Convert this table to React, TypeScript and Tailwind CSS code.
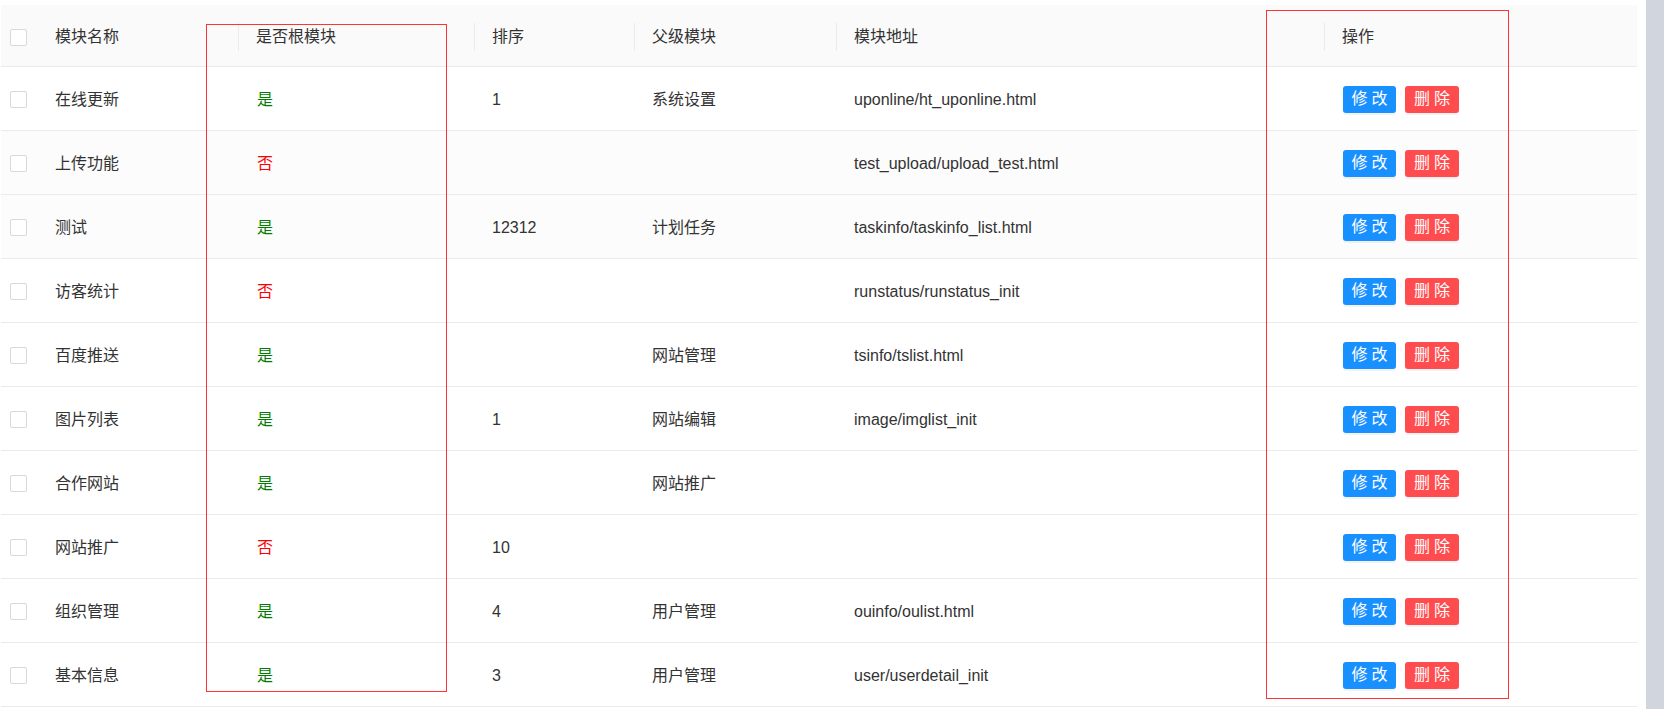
import React from 'react';

interface ModuleRow {
  name: string;
  isRoot: boolean;
  sort: string;
  parent: string;
  url: string;
}

const rows: ModuleRow[] = [
  { name: '在线更新', isRoot: true, sort: '1', parent: '系统设置', url: 'uponline/ht_uponline.html' },
  { name: '上传功能', isRoot: false, sort: '', parent: '', url: 'test_upload/upload_test.html' },
  { name: '测试', isRoot: true, sort: '12312', parent: '计划任务', url: 'taskinfo/taskinfo_list.html' },
  { name: '访客统计', isRoot: false, sort: '', parent: '', url: 'runstatus/runstatus_init' },
  { name: '百度推送', isRoot: true, sort: '', parent: '网站管理', url: 'tsinfo/tslist.html' },
  { name: '图片列表', isRoot: true, sort: '1', parent: '网站编辑', url: 'image/imglist_init' },
  { name: '合作网站', isRoot: true, sort: '', parent: '网站推广', url: '' },
  { name: '网站推广', isRoot: false, sort: '10', parent: '', url: '' },
  { name: '组织管理', isRoot: true, sort: '4', parent: '用户管理', url: 'ouinfo/oulist.html' },
  { name: '基本信息', isRoot: true, sort: '3', parent: '用户管理', url: 'user/userdetail_init' },
];

// column widths follow the screenshot (x = 1 .. 1637)
const cols = 'grid grid-cols-[36px_201px_236px_160px_202px_488px_313px]';

function Checkbox() {
  return <span className="block w-[17px] h-[17px] rounded-[2px] border border-[#d9d9d9] bg-white" />;
}

function HeaderCell({ label, sep = true }: { label: string; sep?: boolean }) {
  return (
    <div className="relative flex items-center pl-[18px]">
      {sep && <span className="absolute left-0 top-1/2 -translate-y-1/2 w-px h-[28px] bg-[#ebebeb]" />}
      {label}
    </div>
  );
}

export default function App() {
  return (
    <div
      className="relative w-[1666px] h-[709px] bg-white flex text-[16px] text-[#333]"
      style={{ fontFamily: '"Liberation Sans", "Noto Sans CJK SC", sans-serif' }}
    >
      <div className="ml-[1px] mt-[5px] w-[1636px]">
        {/* header */}
        <div className={`${cols} h-[62px] pt-[3px] bg-[#fafafa] border-b border-[#ebebeb]`}>
          <div className="flex items-center pl-[9px]">
            <Checkbox />
          </div>
          <HeaderCell label="模块名称" sep={false} />
          <HeaderCell label="是否根模块" />
          <HeaderCell label="排序" />
          <HeaderCell label="父级模块" />
          <HeaderCell label="模块地址" />
          <HeaderCell label="操作" />
        </div>

        {/* body */}
        {rows.map((r, i) => (
          <div
            key={i}
            className={`${cols} h-[64px] pt-[2px] border-b border-[#ebebeb] ${i === 1 || i === 2 ? 'bg-[#fcfcfc]' : 'bg-white'}`}
          >
            <div className="flex items-center pl-[9px]">
              <Checkbox />
            </div>
            <div className="flex items-center pl-[18px]">{r.name}</div>
            <div className="flex items-center pl-[19px]">
              {r.isRoot ? <span className="text-[#008000]">是</span> : <span className="text-[#ff0000]">否</span>}
            </div>
            <div className="flex items-center pl-[18px]">{r.sort}</div>
            <div className="flex items-center pl-[18px]">{r.parent}</div>
            <div className="flex items-center pl-[18px]">{r.url}</div>
            <div className="flex items-center gap-[9px] pl-[19px] -mt-[1px]">
              <button className="w-[53px] h-[27px] rounded-[3px] bg-[#1890ff] text-white text-[16px] tracking-[4px] pl-[4px] shadow-[0_2px_0_rgba(0,0,0,0.05)]">
                修改
              </button>
              <button className="w-[54px] h-[27px] rounded-[3px] bg-[#ff4d4f] text-white text-[16px] tracking-[4px] pl-[4px] shadow-[0_2px_0_rgba(0,0,0,0.05)]">
                删除
              </button>
            </div>
          </div>
        ))}
      </div>

      <div className="ml-auto mr-[2px] w-[18px] h-full bg-[#d1d5de]" />

      {/* red annotation boxes drawn over the table */}
      <div className="absolute left-[206px] top-[24px] w-[241px] h-[668px] border border-[#ff3333] pointer-events-none" />
      <div className="absolute left-[1266px] top-[10px] w-[243px] h-[689px] border border-[#ff3333] pointer-events-none" />
    </div>
  );
}
